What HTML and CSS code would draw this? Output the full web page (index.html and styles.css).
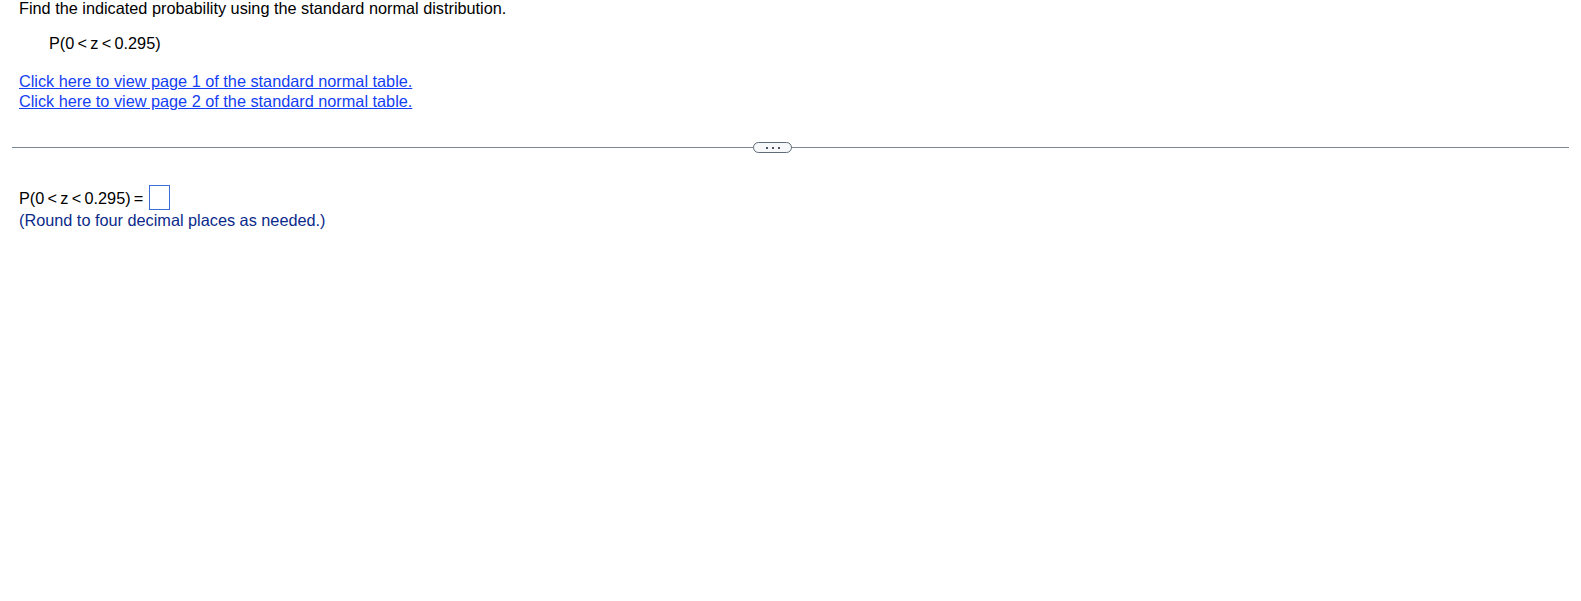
FILE: index.html
```html
<!DOCTYPE html>
<html>
<head>
<meta charset="utf-8">
<link rel="stylesheet" href="styles.css">
</head>
<body>
<div class="question">
  <div class="prompt">Find the indicated probability using the standard normal distribution.</div>
  <div class="expr">P(0&thinsp;&lt;&thinsp;z&thinsp;&lt;&thinsp;0.295)</div>
  <div class="links">
    <a href="#">Click here to view page 1 of the standard normal table.</a><br>
    <a href="#">Click here to view page 2 of the standard normal table.</a>
  </div>
</div>
<div class="divider">
  <span class="pill"><span class="dot"></span><span class="dot"></span><span class="dot"></span></span>
</div>
<div class="answer">
  <div class="ansline">P(0&thinsp;&lt;&thinsp;z&thinsp;&lt;&thinsp;0.295)&thinsp;=&thinsp;<span class="box"></span></div>
  <div class="hint">(Round to four decimal places as needed.)</div>
</div>
</body>
</html>
```
FILE: styles.css
```css
body {
  margin: 0;
  font-family: "Liberation Sans", Arial, sans-serif;
  font-size: 16.27px;
  color: #000;
  background: #fff;
}
.question {
  padding: 0 0 0 19px;
  margin-top: -2px;
}
.prompt {
  line-height: 20px;
}
.expr {
  margin-top: 15px;
  padding-left: 30px;
  line-height: 20px;
}
.links {
  margin-top: 18px;
  line-height: 20px;
}
.links a {
  color: #1440f2;
}
.divider {
  margin: 36px 0 0 12px;
  width: 1557px;
  border-top: 1px solid #7b8794;
  height: 0;
  display: flex;
  justify-content: flex-start;
}
.pill {
  margin-top: -6px;
  margin-left: 741px;
  width: 37px;
  height: 9px;
  border: 1px solid #5f6b78;
  border-radius: 6px;
  background: #f7f8fa;
  display: flex;
  align-items: center;
  justify-content: center;
  gap: 4px;
}
.dot {
  width: 2px;
  height: 2px;
  background: #4a5563;
}
.answer {
  padding-left: 19px;
  margin-top: 37px;
}
.ansline {
  display: flex;
  align-items: center;
  line-height: 24px;
}
.box {
  display: inline-block;
  width: 19px;
  height: 23px;
  border: 1px solid #3a6fd8;
  margin-left: 2px;
}
.hint {
  color: #0b2a8a;
  line-height: 20px;
  margin-top: 0;
}
```
